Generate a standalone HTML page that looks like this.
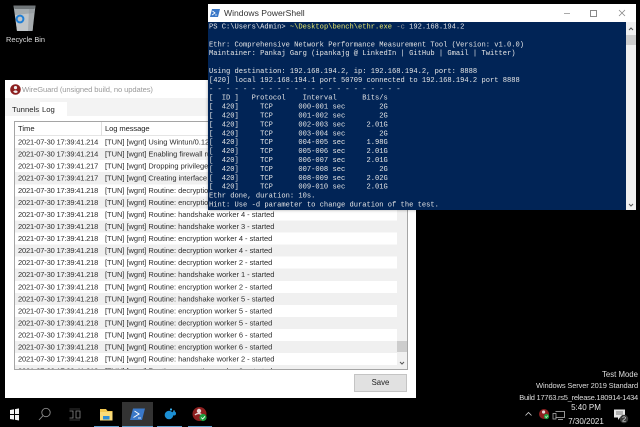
<!DOCTYPE html>
<html><head><meta charset="utf-8"><style>
html,body{margin:0;padding:0;width:640px;height:427px;overflow:hidden;background:#000;font-family:"Liberation Sans",sans-serif}
div,span,pre{position:absolute;white-space:pre}
span.i{position:static}
#w{left:0;top:0;width:640px;height:427px;filter:blur(.3px);overflow:hidden}
#rows{left:0;top:14px;width:764px;height:466px;overflow:hidden;white-space:normal;transform:scale(.5);transform-origin:0 0}
.r{position:relative;width:764px;height:24.14px;font-size:15px;line-height:25px;color:#2e2e2e}
.g{background:#f0f0f0}
.t{left:6px;letter-spacing:-.36px}
.m{left:180px;letter-spacing:-.06px}
pre{margin:0;font-family:"Liberation Mono",monospace}
</style></head><body><div id="w">

<svg style="position:absolute;left:10px;top:3px" width="30" height="30" viewBox="0 0 30 30">
<path d="M3.5 2.5 L25.5 2.5 L22.5 28 L7 28 Z" fill="#a4abae"/>
<path d="M3.5 2.5 L25.5 2.5 L24.5 6 L4.5 6 Z" fill="#6f7578"/>
<path d="M5 12 L24 10 L22.5 28 L7 28 Z" fill="#c0c5c8"/>
<path d="M19 6 L24.5 6 L22.5 28 L18 28 Z" fill="#8f969a" opacity=".55"/>
<circle cx="10" cy="16" r="3.4" fill="none" stroke="#1f7fd6" stroke-width="2"/>
</svg>
<div style="left:6px;top:33.5px;font-size:7.4px;line-height:12px;color:#ddd">Recycle Bin</div>

<div style="left:5px;top:80px;width:411px;height:318px;background:#fff;overflow:hidden">
 <svg style="position:absolute;left:5px;top:4px" width="11" height="11" viewBox="0 0 11 11"><circle cx="5.5" cy="5.5" r="5.3" fill="#8c1f1f"/><circle cx="5.5" cy="3.6" r="1.6" fill="#eee"/><path d="M3.2 7.5 C5 5.8 7 6.2 7.8 8 C6.5 9.4 4.5 9.3 3.2 7.5Z" fill="#eee"/></svg>
 <div style="left:17px;top:3.5px;font-size:7.6px;line-height:12px;letter-spacing:-.1px;color:#9a9a9a">WireGuard (unsigned build, no updates)</div>
 <div style="left:0;top:18px;width:411px;height:300px;background:#f3f3f3"></div>
 <div style="left:35px;top:22px;width:27px;height:14px;background:#fff"></div>
 <div style="left:7px;top:23.5px;font-size:7.7px;line-height:12px;color:#222">Tunnels</div>
 <div style="left:37px;top:23.5px;font-size:7.7px;line-height:12px;color:#222">Log</div>
 <div style="left:0;top:36px;width:411px;height:282px;background:#fff"></div>

 <div style="left:9px;top:41px;width:392px;height:247px;border:1px solid #a5a5a5;background:#fff;overflow:hidden">
  <div style="left:0;top:0;width:392px;height:13px;background:#fff;border-bottom:1px solid #e5e5e5"></div>
  <div style="left:86px;top:0;width:1px;height:14px;background:#e0e0e0"></div>
  <div style="left:3px;top:1px;font-size:7.6px;line-height:12px;color:#222">Time</div>
  <div style="left:90px;top:1px;font-size:7.6px;line-height:12px;letter-spacing:-.1px;color:#222">Log message</div>
  <div id="rows">
  <div class="r"><span class="t">2021-07-30 17:39:41.214</span><span class="m">[TUN] [wgnt] Using Wintun/0.12</span></div>
  <div class="r g"><span class="t">2021-07-30 17:39:41.214</span><span class="m">[TUN] [wgnt] Enabling firewall rules</span></div>
  <div class="r"><span class="t">2021-07-30 17:39:41.217</span><span class="m">[TUN] [wgnt] Dropping privileges</span></div>
  <div class="r g"><span class="t">2021-07-30 17:39:41.217</span><span class="m">[TUN] [wgnt] Creating interface</span></div>
  <div class="r"><span class="t">2021-07-30 17:39:41.218</span><span class="m">[TUN] [wgnt] Routine: decryption worker 1 - started</span></div>
  <div class="r g"><span class="t">2021-07-30 17:39:41.218</span><span class="m">[TUN] [wgnt] Routine: encryption worker 1 - started</span></div>
  <div class="r"><span class="t">2021-07-30 17:39:41.218</span><span class="m">[TUN] [wgnt] Routine: handshake worker 4 - started</span></div>
  <div class="r g"><span class="t">2021-07-30 17:39:41.218</span><span class="m">[TUN] [wgnt] Routine: handshake worker 3 - started</span></div>
  <div class="r"><span class="t">2021-07-30 17:39:41.218</span><span class="m">[TUN] [wgnt] Routine: encryption worker 4 - started</span></div>
  <div class="r g"><span class="t">2021-07-30 17:39:41.218</span><span class="m">[TUN] [wgnt] Routine: decryption worker 4 - started</span></div>
  <div class="r"><span class="t">2021-07-30 17:39:41.218</span><span class="m">[TUN] [wgnt] Routine: decryption worker 2 - started</span></div>
  <div class="r g"><span class="t">2021-07-30 17:39:41.218</span><span class="m">[TUN] [wgnt] Routine: handshake worker 1 - started</span></div>
  <div class="r"><span class="t">2021-07-30 17:39:41.218</span><span class="m">[TUN] [wgnt] Routine: encryption worker 2 - started</span></div>
  <div class="r g"><span class="t">2021-07-30 17:39:41.218</span><span class="m">[TUN] [wgnt] Routine: handshake worker 5 - started</span></div>
  <div class="r"><span class="t">2021-07-30 17:39:41.218</span><span class="m">[TUN] [wgnt] Routine: encryption worker 5 - started</span></div>
  <div class="r g"><span class="t">2021-07-30 17:39:41.218</span><span class="m">[TUN] [wgnt] Routine: decryption worker 5 - started</span></div>
  <div class="r"><span class="t">2021-07-30 17:39:41.218</span><span class="m">[TUN] [wgnt] Routine: decryption worker 6 - started</span></div>
  <div class="r g"><span class="t">2021-07-30 17:39:41.218</span><span class="m">[TUN] [wgnt] Routine: encryption worker 6 - started</span></div>
  <div class="r"><span class="t">2021-07-30 17:39:41.218</span><span class="m">[TUN] [wgnt] Routine: handshake worker 2 - started</span></div>
  <div class="r g"><span class="t">2021-07-30 17:39:41.218</span><span class="m">[TUN] [wgnt] Routine: encryption worker 3 - started</span></div>
  </div>
  <div style="left:382px;top:0;width:10px;height:247px;background:#f0f0f0"></div>
  <div style="left:382px;top:219px;width:10px;height:11px;background:#cdcdcd"></div>
  <svg style="position:absolute;left:382px;top:236px" width="10" height="10" viewBox="0 0 10 10"><path d="M3 4 L5 6 L7 4" fill="none" stroke="#555" stroke-width="1"/></svg>
 </div>
 <div style="left:349px;top:294px;width:51px;height:16px;background:#e1e1e1;border:1px solid #c4c4c4;text-align:center;font-size:7.8px;line-height:16px;color:#222">Save</div>
</div>

<div style="left:208px;top:4px;width:428px;height:206px;background:#fff;box-shadow:0 0 3px rgba(0,0,0,.35)">
 <svg style="position:absolute;left:2px;top:4px" width="10" height="10" viewBox="0 0 10 10"><path d="M2 1 H10 L8 9 H0 Z" fill="#3a78c8"/><path d="M2.5 3 L5 5 L2 7" fill="none" stroke="#fff" stroke-width=".9"/><path d="M5 7 H7" stroke="#fff" stroke-width=".7"/></svg>
 <div style="left:16px;top:3px;font-size:8.6px;line-height:12px;color:#333">Windows PowerShell</div>
 <div style="left:356px;top:9px;width:6px;height:1px;background:#aaa"></div>
 <div style="left:382px;top:6px;width:5px;height:5px;border:1px solid #888"></div>
 <svg style="position:absolute;left:410px;top:5px" width="8" height="8" viewBox="0 0 8 8"><path d="M1 1 L7 7 M7 1 L1 7" stroke="#888" stroke-width=".8"/></svg>
 <div style="left:0;top:18px;width:418px;height:188px;background:#012456;overflow:hidden">
<pre style="left:.5px;top:.5px;font-size:14.2px;line-height:17.8px;color:#e6e6e6;transform:scale(.5);transform-origin:0 0">PS C:\Users\Admin&gt; <span class="i" style="color:#e8e86a">~\Desktop\bench\ethr.exe</span> <span class="i" style="color:#9a9a9a">-c</span> 192.168.194.2

Ethr: Comprehensive Network Performance Measurement Tool (Version: v1.0.0)
Maintainer: Pankaj Garg (ipankajg @ LinkedIn | GitHub | Gmail | Twitter)

Using destination: 192.168.194.2, ip: 192.168.194.2, port: 8888
[420] local 192.168.194.1 port 50709 connected to 192.168.194.2 port 8888
- - - - - - - - - - - - - - - - - - - - - - -
[  ID ]   Protocol    Interval      Bits/s
[  420]     TCP      000-001 sec        2G
[  420]     TCP      001-002 sec        2G
[  420]     TCP      002-003 sec     2.01G
[  420]     TCP      003-004 sec        2G
[  420]     TCP      004-005 sec     1.98G
[  420]     TCP      005-006 sec     2.01G
[  420]     TCP      006-007 sec     2.01G
[  420]     TCP      007-008 sec        2G
[  420]     TCP      008-009 sec     2.02G
[  420]     TCP      009-010 sec     2.01G
Ethr done, duration: 10s.
Hint: Use -d parameter to change duration of the test.</pre>
 </div>
 <div style="left:418px;top:18px;width:10px;height:188px;background:#f0f0f0"></div>
 <div style="left:418px;top:31px;width:10px;height:10px;background:#cdcdcd"></div>
 <svg style="position:absolute;left:418px;top:21px" width="10" height="8" viewBox="0 0 10 8"><path d="M3 5 L5 3 L7 5" fill="none" stroke="#555"/></svg>
 <svg style="position:absolute;left:418px;top:197px" width="10" height="8" viewBox="0 0 10 8"><path d="M3 3 L5 5 L7 3" fill="none" stroke="#555"/></svg>
</div>

<div style="left:500px;top:368.5px;width:138px;text-align:right;font-size:7.8px;line-height:12px;color:#ddd">Test Mode</div>
<div style="left:500px;top:380px;width:138px;text-align:right;font-size:7.5px;line-height:12px;letter-spacing:-.14px;color:#ddd">Windows Server 2019 Standard</div>
<div style="left:500px;top:392px;width:138px;text-align:right;font-size:7.5px;line-height:12px;letter-spacing:-.24px;color:#ddd">Build 17763.rs5_release.180914-1434</div>

<div style="left:122px;top:402px;width:31px;height:25px;background:#333"></div>
<div style="left:94px;top:426px;width:25px;height:1px;background:#5f9fce"></div>
<div style="left:122px;top:426px;width:31px;height:1px;background:#5f9fce"></div>
<div style="left:157px;top:426px;width:25px;height:1px;background:#5f9fce"></div>
<div style="left:188px;top:426px;width:24px;height:1px;background:#5f9fce"></div>

<svg style="position:absolute;left:0;top:400px" width="640" height="27" viewBox="0 400 640 27">
 <path d="M10 410 L14 409.3 V414 H10 Z M15 409.1 L19 408.4 V414 H15 Z M10 415 H14 V419.6 L10 419 Z M15 415 H19 V420.5 L15 419.8 Z" fill="#f2f2f2"/>
 <circle cx="46" cy="412.5" r="4.2" fill="none" stroke="#8a8a8a" stroke-width=".9"/><path d="M43 415.7 L39 420" stroke="#8a8a8a" stroke-width=".9"/>
 <path d="M69.5 411 H73 V418 H69.5 M80 411 H76 V418 H80 Z" fill="none" stroke="#888" stroke-width=".8"/><path d="M69.5 409 H80 M69.5 420 H80" stroke="#888" stroke-width=".8" opacity=".5"/>
 <path d="M100 409 H106 L107.5 411 H112.5 V420 H100 Z" fill="#f3c850"/><path d="M100 412 H112.5 V420.5 H100 Z" fill="#fbdc78"/><rect x="103" y="416" width="6.5" height="3.5" fill="#2f8fd6"/>
 <path d="M133 408.5 H145 L142 420 H130 Z" fill="#3a78c8"/><path d="M134.5 411 L139 414 L133.5 417.5" fill="none" stroke="#fff" stroke-width="1"/><path d="M138 418 H141" stroke="#fff" stroke-width=".8"/>
 <circle cx="169" cy="415" r="4.3" fill="#1c8fd4"/><circle cx="174" cy="413.5" r="2" fill="#1c8fd4"/><circle cx="171" cy="409.5" r="1.1" fill="#3ab0ee"/><circle cx="174" cy="411" r=".8" fill="#3ab0ee"/>
 <circle cx="199.5" cy="414" r="7" fill="#8c1f1f"/><circle cx="199" cy="411" r="2.2" fill="#e8d8d8"/><path d="M195 415 C197 413 200 413 202 415" fill="none" stroke="#e8d8d8" stroke-width="1.2"/><circle cx="203" cy="417.5" r="3.6" fill="#1e9e3e"/><path d="M201.3 417.5 L202.6 419 L205 416.3" fill="none" stroke="#fff" stroke-width=".9"/>
 <path d="M525.5 415.5 L528.5 412.5 L531.5 415.5" fill="none" stroke="#ccc" stroke-width=".8"/>
 <circle cx="544" cy="414" r="5" fill="#8c1f1f"/><circle cx="543.6" cy="412" r="1.6" fill="#e8d8d8"/><circle cx="546.5" cy="416.5" r="2.6" fill="#1e9e3e"/><path d="M545.3 416.5 L546.2 417.5 L547.8 415.7" fill="none" stroke="#fff" stroke-width=".6"/>
 <path d="M555.5 411.5 H564.5 V417.5 H555.5" fill="none" stroke="#bbb" stroke-width=".8"/><path d="M553 413.5 H556 V419 H553 Z" fill="none" stroke="#bbb" stroke-width=".7"/><path d="M558 419.5 H563" stroke="#bbb" stroke-width=".8"/>
 <path d="M614 409.5 H625 V417.5 H620 L618 420 V417.5 H614 Z" fill="#e8e8e8"/><path d="M616 412 H623 M616 414 H623" stroke="#555" stroke-width=".7"/>
 <circle cx="624" cy="419" r="4.2" fill="#3a3a3a"/>
 <text x="622" y="421.7" font-family="Liberation Sans" font-size="7.5" fill="#eee">2</text>
</svg>
<div style="left:566px;top:402px;width:40px;text-align:center;font-size:8px;line-height:12px;color:#e6e6e6">5:40 PM</div>
<div style="left:566px;top:415.5px;width:40px;text-align:center;font-size:8px;line-height:12px;color:#e6e6e6">7/30/2021</div>
</div></body></html>
